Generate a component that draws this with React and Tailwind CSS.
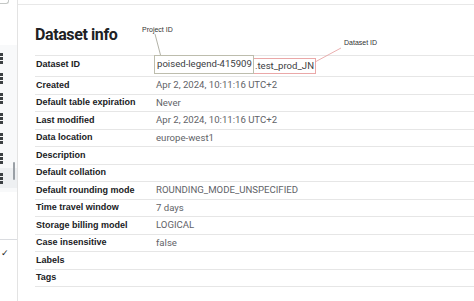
import React from "react";

const rows = [
  { label: "Created", value: "Apr 2, 2024, 10:11:16 UTC+2" },
  { label: "Default table expiration", value: "Never" },
  { label: "Last modified", value: "Apr 2, 2024, 10:11:16 UTC+2" },
  { label: "Data location", value: "europe-west1" },
  { label: "Description", value: "" },
  { label: "Default collation", value: "" },
  { label: "Default rounding mode", value: "ROUNDING_MODE_UNSPECIFIED" },
  { label: "Time travel window", value: "7 days" },
  { label: "Storage billing model", value: "LOGICAL" },
  { label: "Case insensitive", value: "false" },
  { label: "Labels", value: "" },
  { label: "Tags", value: "" },
];

// cut-off "more" dots on the left edge
const Dots = () => (
  <div className="flex flex-col gap-[1px] -ml-[1px]">
    <span className="w-[4px] h-[3px] bg-[#3c4043]" />
    <span className="w-[4px] h-[3px] bg-[#3c4043]" />
    <span className="w-[4px] h-[3px] bg-[#3c4043]" />
  </div>
);

const App = () => {
  return (
    <div className="relative w-[474px] h-[301px] bg-white overflow-hidden flex font-['Roboto',sans-serif] text-[#202124]">
      {/* Sidebar */}
      <div className="w-[18px] shrink-0 border-r border-[#e3e3e3] flex flex-col">
        <div className="w-[9px] h-[4px] border-r border-b border-[#c4c7c5] rounded-br-[3px]" />
        <div className="h-[41px]" />
        <div className="bg-[#f8f9fa] pt-[3px] pb-[4px]">
          {[0, 1, 2, 3, 4, 5].map((i) => (
            <div key={i} className="h-[20px] flex items-center">
              <Dots />
            </div>
          ))}
          <div className="h-[20px] flex items-center bg-[#eef0f2] relative">
            <Dots />
            <span className="absolute left-[13px] top-[-6px] w-[2px] h-[18px] bg-[#9aa0a6] rounded-sm" />
          </div>
        </div>
        <div className="h-[47px]" />
        <div className="border-t border-[#dadce0] pt-[9px] pl-[1px] text-[9px] leading-none text-[#202124]">
          ✓
        </div>
      </div>

      {/* Main */}
      <div className="flex-1 flex flex-col">
        <div className="h-[5px] border-b border-[#e8e8e8]" />
        <div className="pl-[17px]">
          <h2 className="mt-[18px] mb-[8px] text-[16px] leading-[24px] font-bold tracking-[-0.4px]">
            Dataset info
          </h2>
          <div className="border-b border-[#e6e6e6] text-[9.6px]">
            <div className="h-[21px] border-t border-[#e6e6e6] flex items-end pb-[2px]">
              <div className="w-[119px] self-center font-bold text-[9px] font-['Liberation_Sans',sans-serif] pl-[1px]">
                Dataset ID
              </div>
              <div className="flex items-end text-[#3c4043]">
                <span className="h-[19px] flex items-center pl-[2px] pr-[1px] border border-[#bdbdad]">
                  poised-legend-415909
                </span>
                <span className="h-[16px] flex items-center px-[1px] border border-l-0 border-[#eaa8a8]">
                  .test_prod_JN
                </span>
              </div>
            </div>
            {rows.map((r) => (
              <div
                key={r.label}
                className="h-[17.5px] border-t border-[#e6e6e6] flex items-center"
              >
                <div className="w-[121px] font-bold text-[9px] font-['Liberation_Sans',sans-serif] pl-[1px]">
                  {r.label}
                </div>
                <div className="text-[#5f6368]">{r.value}</div>
              </div>
            ))}
          </div>
        </div>
      </div>

      {/* Annotations */}
      <div className="absolute left-[142px] top-[25px] text-[7px] leading-[9px] font-['Liberation_Sans',sans-serif] text-[#333]">
        Project ID
      </div>
      <div className="absolute left-[344px] top-[38px] text-[7px] leading-[9px] font-['Liberation_Sans',sans-serif] text-[#333]">
        Dataset ID
      </div>
      <svg className="absolute left-0 top-0 pointer-events-none" width="474" height="301">
        <line x1="155" y1="34" x2="160.5" y2="55" stroke="#9e9e90" strokeWidth="0.8" />
        <line x1="315" y1="62" x2="341" y2="48" stroke="#e59a9a" strokeWidth="0.8" />
      </svg>
    </div>
  );
};

export default App;
